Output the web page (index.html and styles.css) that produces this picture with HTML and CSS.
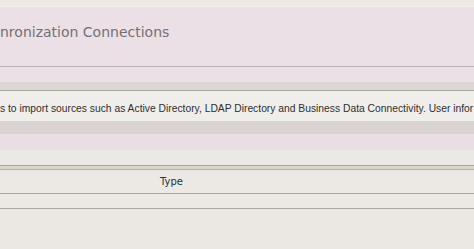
FILE: index.html
```html
<!DOCTYPE html>
<html>
<head>
<meta charset="utf-8">
<link rel="stylesheet" href="styles.css">
</head>
<body>
<div class="page">
  <div class="topband"></div>
  <div class="titlearea">
    <h1 class="title">nronization Connections</h1>
  </div>
  <div class="subbar"></div>
  <div class="grayband"></div>
  <div class="desc"><p class="desc-text">s to import sources such as Active Directory, LDAP Directory and Business Data Connectivity. User infor</p></div>
  <div class="grayband2"></div>
  <div class="pinkband"></div>
  <div class="toolbar"></div>
  <div class="table">
    <div class="head-row"><span class="col-type">Type</span></div>
    <div class="empty-row"></div>
    <div class="rest"></div>
  </div>
</div>
</body>
</html>
```

FILE: styles.css
```css
html, body {
  margin: 0;
  padding: 0;
  background: #ebe8e4;
  width: 474px;
  height: 249px;
  overflow: hidden;
}
.page {
  display: flex;
  flex-direction: column;
  width: 474px;
}
.topband {
  height: 6px;
  background: #ebeae5;
  border-bottom: 1px solid #f1eeee;
}
.titlearea {
  height: 60px;
  background: #ebe0e6;
  border-bottom: 1px solid #bab2b6;
  box-sizing: border-box;
}
.title {
  margin: 0;
  padding-top: 17px;
  font-family: "DejaVu Sans", Verdana, sans-serif;
  font-weight: normal;
  font-size: 14px;
  line-height: 16px;
  color: #737073;
}
.subbar {
  height: 15px;
  background: #ebe0e6;
}
.grayband {
  height: 8px;
  background: #dcd7d4;
  border-bottom: 1px solid #aaa6a2;
}
.desc {
  height: 30px;
  background: #f0eeeb;
  box-sizing: border-box;
  overflow: hidden;
}
.desc-text {
  margin: 0;
  padding-top: 11px;
  white-space: nowrap;
  font-family: "Liberation Sans", Tahoma, sans-serif;
  font-size: 10.3px;
  line-height: 13px;
  color: #2e2e2e;
}
.grayband2 {
  height: 13px;
  background: #d9d4d1;
}
.pinkband {
  height: 16px;
  background: #e9dee4;
}
.toolbar {
  height: 15px;
  background: #ebe9e6;
  border-bottom: 1px solid #a9a59f;
}
.table {
  display: flex;
  flex-direction: column;
}
.head-row {
  height: 24px;
  border-top: 3px solid #dad5cb;
  border-bottom: 1px solid #a9a59f;
  box-shadow: inset 0 1px 0 #b3aea6;
  background: #ece9e5;
  box-sizing: content-box;
}
.col-type {
  display: block;
  padding-left: 160px;
  padding-top: 7px;
  font-family: "DejaVu Sans", Verdana, sans-serif;
  font-size: 10px;
  line-height: 12px;
  color: #26323a;
}
.empty-row {
  height: 14px;
  background: #ece8e4;
  border-bottom: 1px solid #aaa6a1;
}
.rest {
  height: 40px;
  background: #ebe7e3;
}
```
